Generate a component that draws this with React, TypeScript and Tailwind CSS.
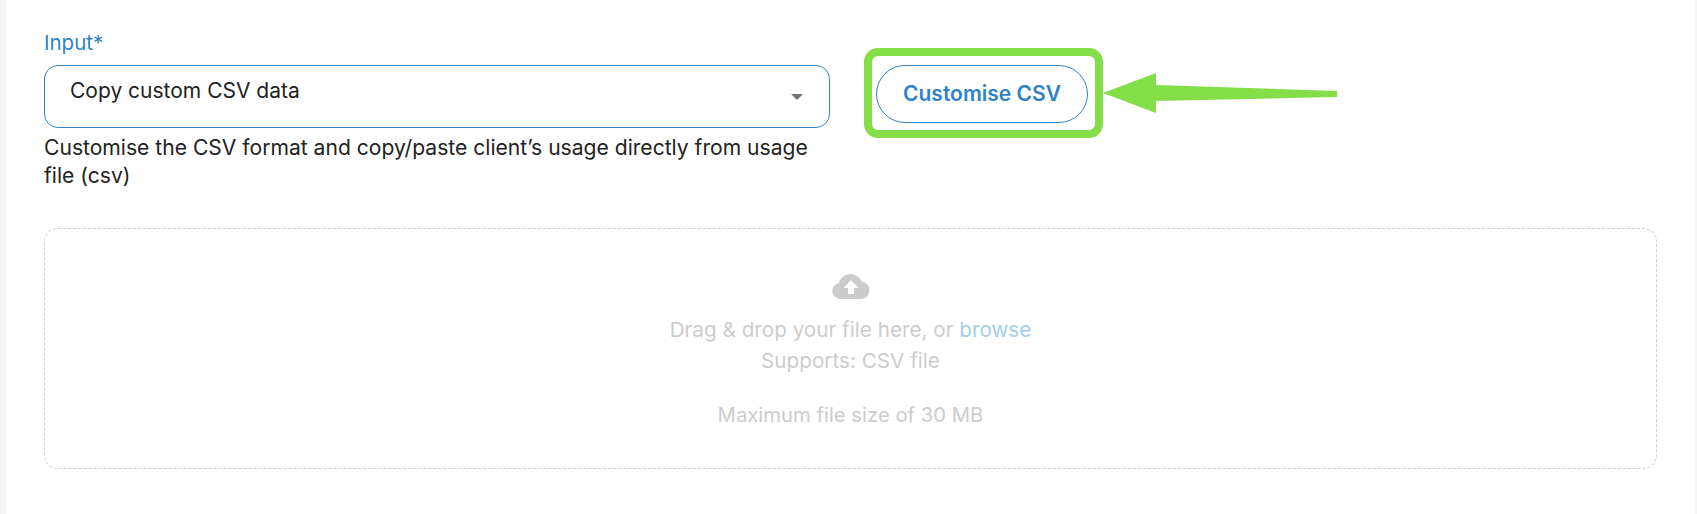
import React from 'react';

const font = "font-['Inter',sans-serif]";

const App: React.FC = () => {
  return (
    <div className={`relative h-[514px] w-[1697px] overflow-hidden bg-white ${font}`}>
      <div className="flex h-full border-l-[6px] border-r-2 border-[#f5f5f5]">
        <div className="flex flex-1 flex-col pl-[38px] pr-[38px] pt-[30px]">
          <div className="h-[26px] text-[20.500px] leading-[26px] text-[#2f83c4]">Input*</div>
          <div className="mt-[9px] flex h-[63px] w-[786px] rounded-[14px] border border-[#2f83c4] pl-[25px] pr-[26px]">
            <span className="mt-[11px] flex-1 text-[21px] leading-[28px] text-[#222222]">Copy custom CSV data</span>
            <svg className="mt-[28px]" width="12" height="6" viewBox="0 0 12 6">
              <path d="M0 0h12L6 6z" fill="#757575" />
            </svg>
          </div>
          <p className="mt-[6px] w-[786px] text-[21.100px] leading-[28px] text-[#222222]">
            Customise the CSV format and copy/paste client’s usage directly from usage file (csv)
          </p>
          <div className="mt-[38px] flex h-[241px] w-[1613px] flex-col items-center rounded-[14px] border border-dashed border-[#cfcfcf] pt-[44px] text-[20.700px] text-[#cccccc]">
            <svg width="38" height="26" viewBox="0 0 38 26">
              <path
                d="M8 26a8 8 0 0 1-1.500-15.800A12.500 12.500 0 0 1 30 8.600 8.800 8.800 0 0 1 30 26z"
                fill="#cccccc"
              />
              <path d="M19 7l7.500 8H22v6h-6v-6h-4.500z" fill="#ffffff" />
            </svg>
            <div className="mt-[15px] leading-[31px]">
              Drag &amp; drop your file here, or <span className="text-[#a3cdea]">browse</span>
            </div>
            <div className="leading-[31px]">Supports: CSV file</div>
            <div className="mt-[23px] text-[20.300px] leading-[31px]">Maximum file size of 30 MB</div>
          </div>
        </div>
      </div>

      <div className="absolute left-[864px] top-[48px] flex h-[90px] w-[239px] items-center rounded-[14px] border-[8px] border-[#84de48] pl-[4px] pt-[2px]">
        <button className="h-[58px] w-[212px] rounded-full border border-[#2f83c4] text-[21px] font-semibold text-[#2f83c4]">
          Customise CSV
        </button>
      </div>

      <svg className="absolute left-[1103px] top-[73px]" width="234" height="40" viewBox="0 0 234 40">
        <path d="M0 20L53 0v12l181 6v6L53 28v12z" fill="#84de48" />
      </svg>
    </div>
  );
};

export default App;
